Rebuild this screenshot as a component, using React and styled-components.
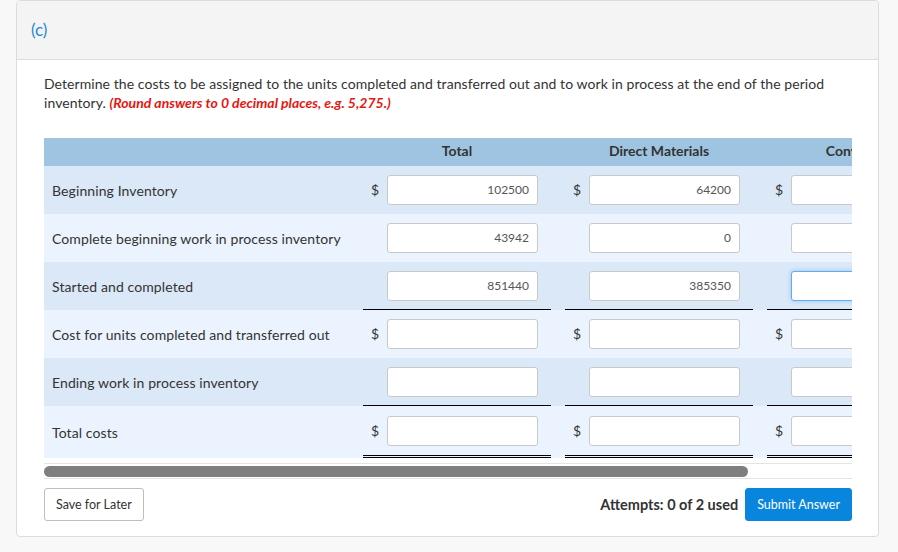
import styled, { createGlobalStyle, css } from "styled-components";

const GlobalStyle = createGlobalStyle`
  html, body {
    margin: 0;
    padding: 0;
    background: #f8f8f8;
    font-family: Lato, "Open Sans", sans-serif;
    color: #333;
  }
`;

const Page = styled.div`
  width: 898px;
  height: 552px;
  padding: 0 19px 0 16px;
  box-sizing: border-box;
`;

const Card = styled.div`
  background: #fff;
  border: 1px solid #dcdcdc;
  border-radius: 4px;
  overflow: hidden;
`;

const CardHeader = styled.div`
  height: 59px;
  background: #f4f4f4;
  border-bottom: 1px solid #dcdcdc;
  display: flex;
  align-items: center;
  padding-left: 14px;
  padding-bottom: 1px;
  box-sizing: border-box;
  font-size: 17px;
  color: #1c8bd6;
`;

const CardBody = styled.div`
  padding: 14px 26px 15px 27px;
`;

const Prompt = styled.p`
  margin: 0 0 26px;
  font-size: 14px;
  line-height: 19px;
  letter-spacing: 0.07px;
  color: #333;
`;

const Hint = styled.em`
  color: #e8150f;
  font-weight: 700;
  letter-spacing: 0;
`;

const Scroller = styled.div`
  width: 808px;
  overflow: hidden;
`;

const Grid = styled.div`
  width: 918px;
`;

const Row = styled.div`
  display: grid;
  grid-template-columns: 312px repeat(3, 202px);
  height: ${({ $h }) => $h || 48}px;
  background: ${({ $shade }) =>
    $shade === "head" ? "#9ec4e2" : $shade === "odd" ? "#dbe8f8" : "#ebf4fe"};
`;

const HeadCell = styled.div`
  display: flex;
  align-items: center;
  justify-content: center;
  padding-bottom: 3px;
  font-size: 14px;
  font-weight: 700;
  color: #333;
`;

const Label = styled.div`
  display: flex;
  align-items: center;
  padding-left: 8px;
  font-size: 14px;
  letter-spacing: 0.1px;
  color: #333;
`;

const ValueCell = styled.div`
  margin: 0 7px;
  display: flex;
  align-items: center;
  ${({ $rule }) =>
    $rule === "single"
      ? css`border-bottom: 1px solid #000;`
      : $rule === "double"
      ? css`border-bottom: 3px double #000;`
      : css`border-bottom: 1px solid transparent;`}
`;

const Dollar = styled.span`
  width: 24px;
  text-align: center;
  font-size: 14px;
  color: #333;
`;

const Field = styled.input`
  width: 151px;
  height: 30px;
  box-sizing: border-box;
  border: 1px solid #c9c9c9;
  border-radius: 3px;
  background: #fff;
  font-family: Lato, sans-serif;
  font-size: 12px;
  color: #555;
  text-align: right;
  padding: 0 8px;
  outline: none;
  ${({ $focus }) =>
    $focus &&
    css`
      border-color: #5cb0f2;
      box-shadow: 0 0 4px rgba(90, 170, 240, 0.55);
    `}
`;

const Track = styled.div`
  width: 808px;
  margin-top: 5px;
  border-top: 1px solid #e4e4e4;
  border-bottom: 1px solid #e4e4e4;
  padding: 2px 0 1px;
`;

const Thumb = styled.div`
  width: 704px;
  height: 11px;
  border-radius: 6px;
  background: #7f7f7f;
`;

const Footer = styled.div`
  margin-top: 9px;
  width: 808px;
  display: flex;
  align-items: center;
`;

const Button = styled.button`
  height: 33px;
  padding: 0 11px;
  border-radius: 3px;
  font-family: Lato, sans-serif;
  font-size: 12.5px;
  cursor: pointer;
  ${({ $primary }) =>
    $primary
      ? css`
          background: #0a85dd;
          border: 1px solid #0a85dd;
          color: #fff;
        `
      : css`
          background: #fff;
          border: 1px solid #bdbdbd;
          color: #333;
        `}
`;

const Attempts = styled.span`
  margin-left: auto;
  margin-right: 7px;
  font-size: 14.5px;
  font-weight: 700;
  color: #333;
`;

const rows = [
  { label: "Beginning Inventory", dollar: true, values: ["102500", "64200", ""] },
  { label: "Complete beginning work in process inventory", values: ["43942", "0", ""] },
  { label: "Started and completed", values: ["851440", "385350", ""], rule: "single", focus: 2 },
  { label: "Cost for units completed and transferred out", dollar: true, values: ["", "", ""] },
  { label: "Ending work in process inventory", values: ["", "", ""], rule: "single" },
  { label: "Total costs", dollar: true, values: ["", "", ""], rule: "double", h: 52 },
];

export default function App() {
  return (
    <>
      <GlobalStyle />
      <Page>
        <Card>
          <CardHeader>(c)</CardHeader>
          <CardBody>
            <Prompt>
              Determine the costs to be assigned to the units completed and transferred out and to work in process at the end of the period
              inventory. <Hint>(Round answers to 0 decimal places, e.g. 5,275.)</Hint>
            </Prompt>
            <Scroller>
              <Grid>
                <Row $shade="head" $h={28}>
                  <div />
                  <HeadCell>Total</HeadCell>
                  <HeadCell>Direct Materials</HeadCell>
                  <HeadCell>Conversion</HeadCell>
                </Row>
                {rows.map((r, i) => (
                  <Row key={r.label} $shade={i % 2 === 0 ? "odd" : "even"} $h={r.h}>
                    <Label>{r.label}</Label>
                    {r.values.map((v, j) => (
                      <ValueCell key={j} $rule={r.rule}>
                        <Dollar>{r.dollar ? "$" : ""}</Dollar>
                        <Field readOnly value={v} $focus={r.focus === j} />
                      </ValueCell>
                    ))}
                  </Row>
                ))}
              </Grid>
            </Scroller>
            <Track>
              <Thumb />
            </Track>
            <Footer>
              <Button>Save for Later</Button>
              <Attempts>Attempts: 0 of 2 used</Attempts>
              <Button $primary>Submit Answer</Button>
            </Footer>
          </CardBody>
        </Card>
      </Page>
    </>
  );
}
